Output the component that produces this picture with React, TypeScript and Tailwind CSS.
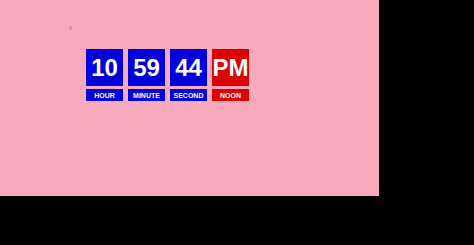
const units = [
  { value: "10", label: "HOUR", color: "bg-[#0000dd]" },
  { value: "59", label: "MINUTE", color: "bg-[#0000dd]" },
  { value: "44", label: "SECOND", color: "bg-[#0000dd]" },
  { value: "PM", label: "NOON", color: "bg-[#dd0000]" },
]

export default function App() {
  return (
    <div className="w-[474px] h-[245px] bg-black overflow-hidden font-['Liberation_Sans',Arial,sans-serif]">
      <div className="relative w-[379px] h-[196px] bg-[#f8a9bc] pt-[49px] pl-[86px]">
        {/* stray cursor */}
        <div className="absolute left-[69px] top-[26px] w-[3px] h-[4px] bg-[#b9a2aa]" />
        <div className="flex gap-[5px]">
          {units.map((u) => (
            <div key={u.label} className="flex flex-col gap-[3px] w-[37px]">
              <div
                className={`${u.color} h-[37px] flex items-center justify-center text-white font-bold text-[24px] leading-none`}
              >
                {u.value}
              </div>
              <div
                className={`${u.color} h-[12px] flex items-center justify-center text-white font-bold text-[7px] leading-none`}
              >
                {u.label}
              </div>
            </div>
          ))}
        </div>
      </div>
    </div>
  )
}
